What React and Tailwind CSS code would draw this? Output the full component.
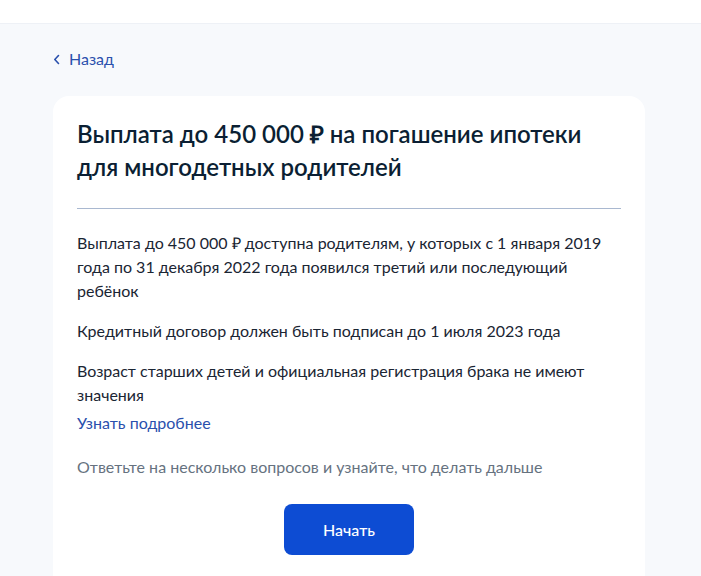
export default function App() {
  return (
    <div className="min-h-[576px] bg-[#f7f9fc] font-['Lato','Liberation_Sans',sans-serif] text-[#0b1f33]">
      <header className="h-6 bg-white border-b border-[#eef1f6]" />

      <main className="pl-[53px] pr-[56px]">
        <a href="#" className="flex items-center gap-[9px] h-[20px] mt-[25px] text-base text-[#2a50ad]">
          <svg width="7" height="11" viewBox="0 0 7 11" fill="none">
            <path d="M5.5 1.5L1.8 5.5l3.7 4" stroke="currentColor" strokeWidth="1.6" strokeLinecap="round" strokeLinejoin="round" />
          </svg>
          Назад
        </a>

        <section className="mt-[27px] bg-white rounded-2xl px-6 pt-[21px] pb-10">
          <h1 className="text-[24px] leading-[33px] font-semibold text-[#0b1f33]">
            Выплата до 450 000 ₽ на погашение ипотеки
            <br />
            для многодетных родителей
          </h1>

          <div className="mt-[25px] h-px bg-[#a9b8d0]" />

          <div className="mt-[22px] text-base leading-6 text-[#1a2533] flex flex-col gap-4">
            <p>
              Выплата до 450 000 ₽ доступна родителям, у которых с 1 января 2019 года по 31 декабря 2022 года появился третий или последующий ребёнок
            </p>
            <p>Кредитный договор должен быть подписан до 1 июля 2023 года</p>
            <div>
              <p>Возраст старших детей и официальная регистрация брака не имеют значения</p>
              <a href="#" className="block mt-1 text-[#2a50ad]">Узнать подробнее</a>
            </div>
          </div>

          <p className="mt-5 text-base leading-6 text-[#66727f]">
            Ответьте на несколько вопросов и узнайте, что делать дальше
          </p>

          <div className="mt-[25px] flex justify-center">
            <button className="w-[130px] h-[51px] rounded-lg bg-[#0d4cd3] text-white text-base font-medium">
              Начать
            </button>
          </div>
        </section>
      </main>
    </div>
  );
}
